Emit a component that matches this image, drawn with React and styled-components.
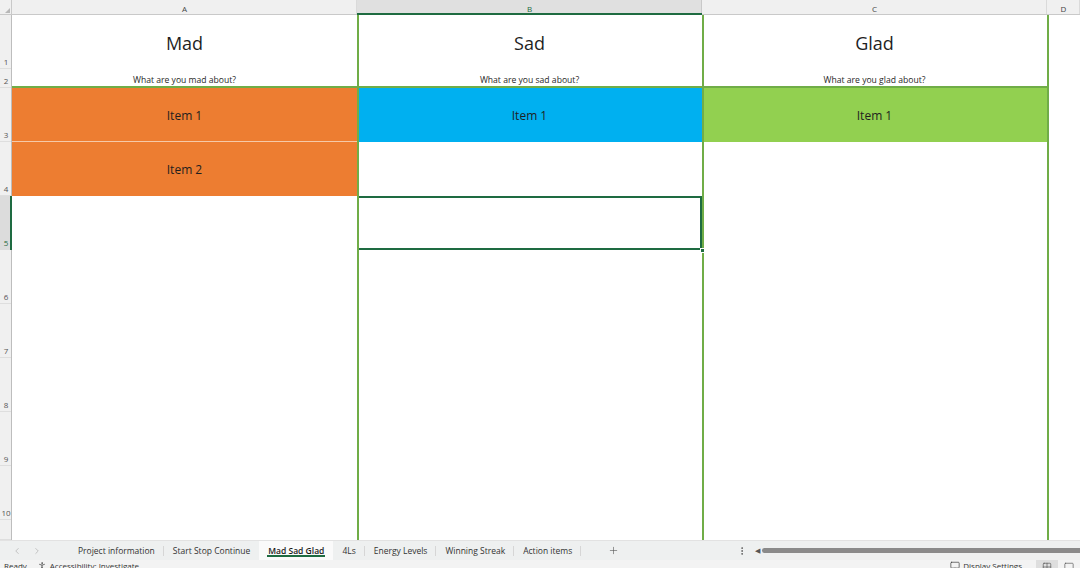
import React from "react"
import styled, { createGlobalStyle } from "styled-components"
import { PersonStanding, Monitor, Grid2x2, ChevronLeft, ChevronRight, Plus, EllipsisVertical } from "lucide-react"

const GREEN_LINE = "#70ad47"
const SELECT = "#1e6b41"

const GlobalStyle = createGlobalStyle`
  html, body {
    margin: 0;
    width: 1080px;
    height: 568px;
    overflow: hidden;
    background: #fff;
    font-family: "Open Sans", "Noto Sans", sans-serif;
  }
`

const Window = styled.div`
  display: flex;
  flex-direction: column;
  width: 1080px;
  height: 568px;
  overflow: hidden;
`

const Sheet = styled.div`
  display: grid;
  grid-template-columns: 12px 345px 345px 345px 33px;
  grid-template-rows: 15px 54px 19px repeat(8, 54px) 20px;
  height: 540px;
  flex: none;
  overflow: hidden;
`

const Corner = styled.div`
  position: relative;
  background: #f0f0f0;
  box-shadow: inset -1px -1px 0 #c9c9c9;
  &::after {
    content: "";
    position: absolute;
    right: 2px;
    bottom: 2px;
    border-style: solid;
    border-width: 0 0 5px 5px;
    border-color: transparent transparent #b8b8b8 transparent;
  }
`

const ColHead = styled.div`
  display: flex;
  align-items: center;
  justify-content: center;
  font-size: 8px;
  padding-top: 1px;
  box-sizing: border-box;
  color: ${p => (p.$active ? "#1e6b41" : "#444")};
  background: ${p => (p.$active ? "#e0e0e0" : "#f0f0f0")};
  box-shadow: ${p =>
    p.$active ? `inset 0 -2px 0 ${SELECT}, inset -1px 0 0 #c9c9c9` : "inset 0 -1px 0 #c9c9c9, inset -1px 0 0 #dadada"};
`

const RowHead = styled.div`
  display: flex;
  align-items: flex-end;
  justify-content: center;
  padding-bottom: 2px;
  box-sizing: border-box;
  font-size: 8px;
  line-height: 10px;
  color: ${p => (p.$active ? "#1e6b41" : "#555")};
  background: ${p => (p.$active ? "#dcdcdc" : "#f0f0f0")};
  box-shadow: ${p =>
    p.$active ? `inset -2px 0 0 ${SELECT}` : "inset -1px 0 0 #bdbdbd, inset 0 -1px 0 #dedede"};
`

const edge = p => {
  const parts = []
  if (p.$left) parts.push(`inset 2px 0 0 ${p.$left}`)
  if (p.$bottom) parts.push(`inset 0 -2px 0 ${p.$bottom}`)
  if (p.$split) parts.push(`inset 0 -1px 0 ${p.$split}`)
  if (p.$selected) parts.push(`inset 0 0 0 2px ${SELECT}`)
  return parts.length ? parts.join(", ") : "none"
}

const sizes = { title: "18px", question: "8.6px", item: "12px" }

const Cell = styled.div`
  position: relative;
  display: flex;
  align-items: ${p => (p.$kind === "question" ? "flex-end" : "center")};
  justify-content: center;
  padding-top: ${p => (p.$kind === "title" ? "4px" : p.$kind === "item" ? "2px" : "0")};
  padding-bottom: ${p => (p.$kind === "question" ? "3px" : "0")};
  box-sizing: border-box;
  background: ${p => p.$fill || "#fff"};
  box-shadow: ${edge};
  color: #1f1f1f;
  font-size: ${p => sizes[p.$kind] || "12px"};
  line-height: 1.2;
  white-space: nowrap;
`

const FillHandle = styled.span`
  position: absolute;
  right: -3px;
  bottom: -3px;
  width: 5px;
  height: 5px;
  background: ${SELECT};
  border: 1px solid #fff;
  box-sizing: border-box;
  z-index: 2;
`

const TabBar = styled.div`
  display: flex;
  align-items: center;
  height: 20px;
  flex: none;
  background: #eef0f0;
  border-top: 1px solid #e2e2e2;
  box-sizing: border-box;
  font-size: 8.5px;
  color: #333;
`

const NavArrows = styled.div`
  display: flex;
  align-items: center;
  gap: 10px;
  padding-left: 12px;
  width: 57px;
  color: #a6a6a6;
`

const Tabs = styled.div`
  display: flex;
  align-items: center;
  height: 100%;
  width: 668px;
`

const Tab = styled.div`
  position: relative;
  display: flex;
  align-items: center;
  height: 100%;
  padding: 0 9px;
  font-weight: ${p => (p.$active ? 600 : 400)};
  color: ${p => (p.$active ? "#1a1a1a" : "#333")};
  background: ${p => (p.$active ? "#fafafa" : "transparent")};
  &::after {
    content: "";
    position: absolute;
    right: 0;
    top: 5px;
    height: 10px;
    width: 1px;
    background: ${p => (p.$last ? "#d6d6d6" : p.$active || p.$beforeActive ? "transparent" : "#d6d6d6")};
  }
  &::before {
    content: "";
    display: ${p => (p.$active ? "block" : "none")};
    position: absolute;
    left: 8px;
    right: 8px;
    bottom: 3px;
    height: 2px;
    background: ${SELECT};
  }
`

const AddTab = styled.div`
  display: flex;
  align-items: center;
  margin-left: 27px;
  color: #555;
`

const Scroller = styled.div`
  display: flex;
  align-items: center;
  flex: 1;
  height: 100%;
  gap: 6px;
  color: #555;
`

const ScrollLeft = styled.span`
  font-size: 7px;
  color: #555;
  margin-left: 2px;
`

const Thumb = styled.div`
  flex: 1;
  height: 5px;
  margin-left: -4px;
  border-radius: 3px 0 0 3px;
  background: #8a8a8a;
`

const StatusBar = styled.div`
  display: flex;
  align-items: flex-start;
  height: 22px;
  flex: none;
  padding: 0 0 0 4px;
  box-sizing: border-box;
  background: #f3f3f3;
  font-size: 8px;
  color: #333;
`

const StatusItem = styled.div`
  display: flex;
  align-items: center;
  gap: 3px;
  margin-right: ${p => p.$gap || "0"};
`

const ViewButton = styled.div`
  display: flex;
  align-items: center;
  justify-content: center;
  width: 22px;
  height: 14px;
  background: ${p => (p.$active ? "#dedede" : "transparent")};
  color: #555;
`

const Spacer = styled.div`
  flex: 1;
`

const rows = [
  { n: 1 }, { n: 2 }, { n: 3 }, { n: 4 }, { n: 5 }, { n: 6 },
  { n: 7 }, { n: 8 }, { n: 9 }, { n: 10 }, { n: 11, hidden: true },
]

const titles = ["Mad", "Sad", "Glad"]
const cards = {
  3: ["#ed7d31", "#00b0f0", "#92d050"],
  4: ["#ed7d31", null, null],
}
const cardText = {
  3: ["Item 1", "Item 1", "Item 1"],
  4: ["Item 2", "", ""],
}

const tabs = [
  "Project information",
  "Start Stop Continue",
  "Mad Sad Glad",
  "4Ls",
  "Energy Levels",
  "Winning Streak",
  "Action items",
]

function cellFor(row, col) {
  const props = { key: `${row}-${col}` }
  if (col >= 1) props.$left = GREEN_LINE
  if (col === 3) {
    return <Cell {...props} />
  }
  let text = ""
  if (row === 1) {
    props.$kind = "title"
    text = titles[col]
  }
  if (row === 2) {
    props.$kind = "question"
    props.$bottom = GREEN_LINE
    text = `What are you ${titles[col].toLowerCase()} about?`
  }
  if (cards[row]) {
    props.$kind = "item"
    props.$fill = cards[row][col]
    text = cardText[row][col]
  }
  if (row === 3 && col === 0) props.$split = "#f6c9a8"
  if (row === 5 && col === 1) {
    props.$selected = true
    return (
      <Cell {...props}>
        <FillHandle />
      </Cell>
    )
  }
  return <Cell {...props}>{text}</Cell>
}

export default function App() {
  return (
    <Window>
      <GlobalStyle />
      <Sheet>
        <Corner />
        {["A", "B", "C", "D"].map(l => (
          <ColHead key={l} $active={l === "B"}>{l}</ColHead>
        ))}
        {rows.map(r => (
          <React.Fragment key={r.n}>
            <RowHead $active={r.n === 5}>{r.hidden ? "" : r.n}</RowHead>
            {[0, 1, 2, 3].map(c => cellFor(r.n, c))}
          </React.Fragment>
        ))}
      </Sheet>

      <TabBar>
        <NavArrows>
          <ChevronLeft size={10} strokeWidth={1.5} />
          <ChevronRight size={10} strokeWidth={1.5} />
        </NavArrows>
        <Tabs>
          {tabs.map((t, i) => (
            <Tab
              key={t}
              $active={t === "Mad Sad Glad"}
              $beforeActive={tabs[i + 1] === "Mad Sad Glad"}
              $last={i === tabs.length - 1}
            >
              {t}
            </Tab>
          ))}
          <AddTab>
            <Plus size={11} strokeWidth={1.3} />
          </AddTab>
        </Tabs>
        <Scroller>
          <EllipsisVertical size={10} strokeWidth={2} />
          <ScrollLeft>◀</ScrollLeft>
          <Thumb />
        </Scroller>
      </TabBar>

      <StatusBar>
        <StatusItem $gap="10px">Ready</StatusItem>
        <StatusItem>
          <PersonStanding size={10} strokeWidth={1.6} />
          <span>Accessibility: Investigate</span>
        </StatusItem>
        <Spacer />
        <StatusItem $gap="14px">
          <Monitor size={10} strokeWidth={1.6} />
          <span>Display Settings</span>
        </StatusItem>
        <ViewButton $active>
          <Grid2x2 size={10} strokeWidth={1.6} />
        </ViewButton>
        <ViewButton>
          <Monitor size={10} strokeWidth={1.6} />
        </ViewButton>
      </StatusBar>
    </Window>
  )
}
